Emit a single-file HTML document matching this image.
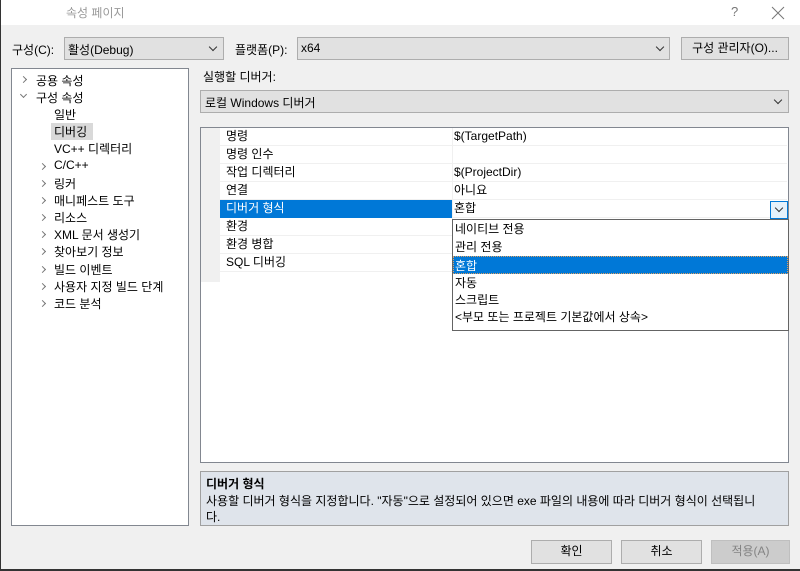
<!DOCTYPE html>
<html><head><meta charset="utf-8"><style>
*{margin:0;padding:0;box-sizing:border-box}
body{width:800px;height:571px;overflow:hidden;background:#f0f0f0;font-family:"Liberation Sans","Noto Sans CJK KR",sans-serif;font-size:12px;color:#000;position:relative}
.a{position:absolute;white-space:nowrap}
.combo{position:absolute;background:#e1e1e1;border:1px solid #adadad}
.chev{position:absolute;width:6px;height:6px;border-right:1px solid #333;border-bottom:1px solid #333;transform:rotate(45deg)}
.tchev{position:absolute;width:5px;height:5px;border-right:1px solid #777;border-bottom:1px solid #777}
.btn{position:absolute;background:#e1e1e1;border:1px solid #adadad;text-align:center;line-height:21px}
.row{position:absolute;left:220px;width:567px;height:18px;border-bottom:1px solid #f0f0f0}
.row span{position:absolute;line-height:17px}
</style></head><body>
<div class="a" style="left:0;top:0;width:800px;height:25px;background:#fff"></div>
<div class="a" style="left:0;top:0;width:1px;height:571px;background:#333"></div>
<div class="a" style="left:0;top:569px;width:800px;height:2px;background:#333"></div>
<div class="a" style="left:66px;top:4px;color:#999;font-size:12px">속성 페이지</div>
<div class="a" style="left:731px;top:4px;color:#777;font-size:13px">?</div>
<svg class="a" style="left:771px;top:6px" width="14" height="14"><path d="M1 1L13 13M13 1L1 13" stroke="#777" stroke-width="1"/></svg>

<div class="a" style="left:12px;top:41px">구성(C):</div>
<div class="combo" style="left:64px;top:37px;width:160px;height:23px"></div>
<div class="a" style="left:68px;top:41px">활성(Debug)</div>
<div class="chev" style="left:210px;top:44px"></div>
<div class="a" style="left:235px;top:41px">플랫폼(P):</div>
<div class="combo" style="left:297px;top:37px;width:373px;height:23px"></div>
<div class="a" style="left:301px;top:41px">x64</div>
<div class="chev" style="left:657px;top:44px"></div>
<div class="btn" style="left:681px;top:37px;width:108px;height:23px">구성 관리자(O)...</div>

<div class="a" style="left:11px;top:68px;width:178px;height:458px;background:#fff;border:1px solid #828790"></div>
<div class="tchev" style="left:21px;top:77px;transform:rotate(-45deg)"></div>
<div class="a" style="left:36px;top:72px">공용 속성</div>
<div class="tchev" style="left:21px;top:92px;transform:rotate(45deg)"></div>
<div class="a" style="left:36px;top:89px">구성 속성</div>
<div class="a" style="left:54px;top:106px">일반</div>
<div class="a" style="left:51px;top:123px;width:42px;height:17px;background:#d9d9d9"></div>
<div class="a" style="left:54px;top:123px">디버깅</div>
<div class="a" style="left:54px;top:140px">VC++ 디렉터리</div>
<div class="tchev" style="left:40px;top:164px;transform:rotate(-45deg)"></div><div class="a" style="left:54px;top:158px">C/C++</div>
<div class="tchev" style="left:40px;top:181px;transform:rotate(-45deg)"></div><div class="a" style="left:54px;top:175px">링커</div>
<div class="tchev" style="left:40px;top:198px;transform:rotate(-45deg)"></div><div class="a" style="left:54px;top:192px">매니페스트 도구</div>
<div class="tchev" style="left:40px;top:215px;transform:rotate(-45deg)"></div><div class="a" style="left:54px;top:209px">리소스</div>
<div class="tchev" style="left:40px;top:232px;transform:rotate(-45deg)"></div><div class="a" style="left:54px;top:226px">XML 문서 생성기</div>
<div class="tchev" style="left:40px;top:249px;transform:rotate(-45deg)"></div><div class="a" style="left:54px;top:243px">찾아보기 정보</div>
<div class="tchev" style="left:40px;top:267px;transform:rotate(-45deg)"></div><div class="a" style="left:54px;top:261px">빌드 이벤트</div>
<div class="tchev" style="left:40px;top:284px;transform:rotate(-45deg)"></div><div class="a" style="left:54px;top:278px">사용자 지정 빌드 단계</div>
<div class="tchev" style="left:40px;top:301px;transform:rotate(-45deg)"></div><div class="a" style="left:54px;top:295px">코드 분석</div>

<div class="a" style="left:203px;top:68px">실행할 디버거:</div>
<div class="combo" style="left:200px;top:90px;width:589px;height:23px"></div>
<div class="a" style="left:205px;top:94px">로컬 Windows 디버거</div>
<div class="chev" style="left:775px;top:97px"></div>

<div class="a" style="left:200px;top:127px;width:589px;height:336px;background:#fff;border:1px solid #828790"></div>
<div class="a" style="left:201px;top:128px;width:19px;height:154px;background:#f0f0f0"></div>
<div class="row" style="top:128px"><span style="left:6px">명령</span><span style="left:234px">$(TargetPath)</span></div>
<div class="row" style="top:146px"><span style="left:6px">명령 인수</span></div>
<div class="row" style="top:164px"><span style="left:6px">작업 디렉터리</span><span style="left:234px">$(ProjectDir)</span></div>
<div class="row" style="top:182px"><span style="left:6px">연결</span><span style="left:234px">아니요</span></div>
<div class="row" style="top:200px"><span style="left:0;width:232px;height:18px;background:#0078d7"></span><span style="left:6px;color:#fff">디버거 형식</span><span style="left:234px">혼합</span></div>
<div class="row" style="top:218px"><span style="left:6px">환경</span></div>
<div class="row" style="top:236px"><span style="left:6px">환경 병합</span></div>
<div class="row" style="top:254px"><span style="left:6px">SQL 디버깅</span></div>
<div class="a" style="left:452px;top:128px;width:1px;height:154px;background:#f0f0f0"></div>
<div class="a" style="left:770px;top:201px;width:18px;height:18px;background:#e5f1fb;border:1px solid #0078d7"></div>
<div class="chev" style="left:776px;top:205px"></div>

<div class="a" style="left:452px;top:219px;width:337px;height:112px;background:#fff;border:1px solid #646464"></div>
<div class="a" style="left:455px;top:220px">네이티브 전용</div>
<div class="a" style="left:455px;top:238px">관리 전용</div>
<div class="a" style="left:453px;top:256px;width:335px;height:18px;background:#0078d7;border:1px dotted #e0a060"></div>
<div class="a" style="left:455px;top:257px;color:#fff">혼합</div>
<div class="a" style="left:455px;top:274px">자동</div>
<div class="a" style="left:455px;top:291px">스크립트</div>
<div class="a" style="left:455px;top:308px">&lt;부모 또는 프로젝트 기본값에서 상속&gt;</div>

<div class="a" style="left:200px;top:471px;width:589px;height:55px;background:#dfe4eb;border:1px solid #a0a0a0"></div>
<div class="a" style="left:206px;top:475px;font-weight:bold">디버거 형식</div>
<div class="a" style="left:206px;top:492px">사용할 디버거 형식을 지정합니다. "자동"으로 설정되어 있으면 exe 파일의 내용에 따라 디버거 형식이 선택됩니</div>
<div class="a" style="left:206px;top:508px">다.</div>

<div class="btn" style="left:531px;top:540px;width:81px;height:24px">확인</div>
<div class="btn" style="left:621px;top:540px;width:81px;height:24px">취소</div>
<div class="btn" style="left:711px;top:540px;width:79px;height:24px;background:#ccc;border-color:#bfbfbf;color:#838383">적용(A)</div>
</body></html>
